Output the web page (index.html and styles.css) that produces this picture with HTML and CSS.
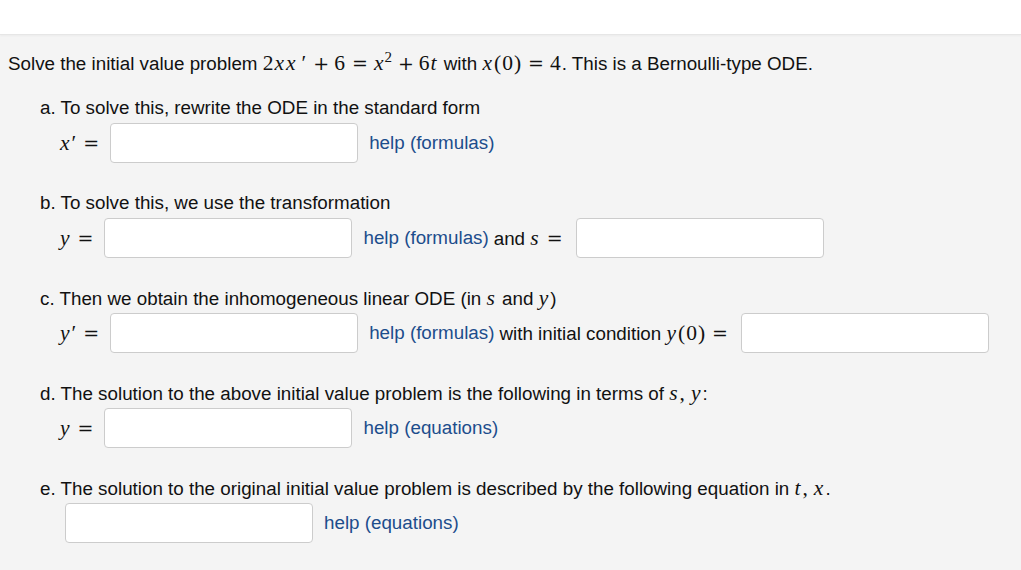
FILE: index.html
```html
<!DOCTYPE html>
<html>
<head>
<meta charset="utf-8">
<link rel="stylesheet" href="styles.css">
</head>
<body>
<div class="topbar"></div>
<div class="content">
  <p class="title">Solve the initial value problem <span class="m"><span class="n">2</span><i>x</i><i>x</i><span class="pr">′</span><span class="bop">+</span><span class="n">6</span><span class="op">=</span><i>x</i><sup class="n">2</sup><span class="bop">+</span><span class="n">6</span><i>t</i></span> with <span class="m"><i>x</i><span class="n">(0)</span><span class="op">=</span><span class="n">4</span></span>. This is a Bernoulli-type ODE.</p>

  <div class="part">
    <div class="ptext">a. To solve this, rewrite the ODE in the standard form</div>
    <div class="row">
      <span class="lbl m"><i>x</i><span class="pr2">′</span><span class="op">=</span></span>
      <span class="inp"></span>
      <a class="help">help (formulas)</a>
    </div>
  </div>

  <div class="part">
    <div class="ptext">b. To solve this, we use the transformation</div>
    <div class="row">
      <span class="lbl m"><i>y</i><span class="op">=</span></span>
      <span class="inp"></span>
      <a class="help">help (formulas)</a><span class="txt">and <span class="m"><i>s</i><span class="op">=</span></span></span>
      <span class="inp"></span>
    </div>
  </div>

  <div class="part">
    <div class="ptext">c. Then we obtain the inhomogeneous linear ODE (in <span class="m"><i>s</i></span> and <span class="m"><i>y</i></span>)</div>
    <div class="row">
      <span class="lbl m"><i>y</i><span class="pr2">′</span><span class="op">=</span></span>
      <span class="inp"></span>
      <a class="help">help (formulas)</a><span class="txt">with initial condition <span class="m"><i>y</i><span class="n">(0)</span><span class="op">=</span></span></span>
      <span class="inp"></span>
    </div>
  </div>

  <div class="part">
    <div class="ptext">d. The solution to the above initial value problem is the following in terms of <span class="m"><i>s</i>,<i class="sp">y</i></span>:</div>
    <div class="row">
      <span class="lbl m"><i>y</i><span class="op">=</span></span>
      <span class="inp"></span>
      <a class="help">help (equations)</a>
    </div>
  </div>

  <div class="part">
    <div class="ptext">e. The solution to the original initial value problem is described by the following equation in <span class="m"><i>t</i>,<i class="sp">x</i></span>.</div>
    <div class="row rowe">
      <span class="inp"></span>
      <a class="help">help (equations)</a>
    </div>
  </div>
</div>
</body>
</html>
```
FILE: styles.css
```css
html, body {
  margin: 0;
  padding: 0;
}
body {
  background: #f4f4f4;
  font-family: "Liberation Sans", Arial, sans-serif;
  font-size: 18.8px;
  color: #111;
}
.topbar {
  height: 34px;
  background: #fff;
  border-bottom: 1px solid #e6e6e6;
  box-shadow: 0 1px 2px rgba(0,0,0,0.04);
}
.content {
  padding: 0 0 0 8px;
}
.title {
  margin: 0;
  padding-top: 18px;
  line-height: 20px;
  height: 20px;
  white-space: nowrap;
}
.ptext {
  white-space: nowrap;
}
.m {
  font-family: "Liberation Serif", "DejaVu Serif", serif;
  font-size: 21.5px;
  letter-spacing: 1px;
}
.m i {
  font-style: italic;
  margin-right: 1px;
}
.m .n {
  font-style: normal;
}
.m sup {
  font-size: 15px;
  vertical-align: 8px;
  line-height: 0;
  margin-left: -1px;
}
.op, .bop {
  font-family: "DejaVu Serif", serif;
  font-size: 19px;
  letter-spacing: 0;
}
.op {
  margin: 0 6px;
}
.bop {
  margin: 0 5px;
}
.pr {
  margin-left: 4px;
  margin-right: 1px;
}
.pr2 {
  margin-left: 0;
}
.sp {
  margin-left: 5px;
}
.part {
  padding-left: 32px;
  margin-top: 25px;
}
.part + .part {
  margin-top: 30px;
}
.ptext {
  line-height: 20px;
  height: 20px;
}
.row {
  display: flex;
  align-items: center;
  margin-top: 5px;
  padding-left: 20px;
  height: 40px;
}
.rowe {
  padding-left: 25px;
}
.lbl {
  display: inline-block;
  margin-right: 5px;
}
.inp {
  display: inline-block;
  box-sizing: border-box;
  width: 248px;
  height: 40px;
  background: #fff;
  border: 1px solid #ccc;
  border-radius: 4px;
  flex: none;
}
.help {
  color: #1c4d8c;
  margin-left: 11px;
  text-decoration: none;
}
.txt {
  margin-left: 5px;
  margin-right: 13px;
}
.txt .op {
  margin-right: 0;
}
```
